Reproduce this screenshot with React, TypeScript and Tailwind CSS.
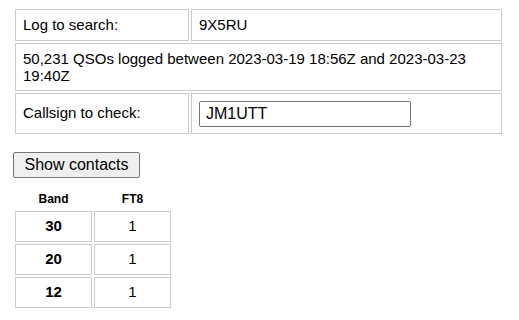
export default function App() {
  const rows = [
    { band: "30", ft8: "1" },
    { band: "20", ft8: "1" },
    { band: "12", ft8: "1" },
  ];
  const cell = "border border-[#cccccc] px-[7px] align-middle";
  return (
    <div className="min-h-screen bg-white text-black font-['Liberation_Sans',Arial,sans-serif] text-[15px] pl-[13px] pt-[7px]">
      <table className="border-separate border-spacing-[2px] w-[491px]">
        <tbody>
          <tr className="h-[32px]">
            <td className={`${cell} w-[174px]`}>Log to search:</td>
            <td className={cell}>9X5RU</td>
          </tr>
          <tr className="h-[48px]">
            <td colSpan={2} className={`${cell} leading-[17px]`}>
              50,231 QSOs logged between 2023-03-19 18:56Z and 2023-03-23 19:40Z
            </td>
          </tr>
          <tr className="h-[41px]">
            <td className={cell}>Callsign to check:</td>
            <td className={cell}>
              <input
                type="text"
                defaultValue="JM1UTT"
                className="w-[212px] h-[26px] border border-[#767676] rounded-[2px] px-[6px] text-[16px] outline-none"
              />
            </td>
          </tr>
        </tbody>
      </table>

      {/* Submit */}
      <button
        type="button"
        className="mt-[16px] h-[26px] w-[127px] border border-[#767676] bg-[#efefef] rounded-[2px] text-[16px] leading-none"
      >
        Show contacts
      </button>

      {/* Results */}
      <table className="border-separate border-spacing-[2px] mt-[9px]">
        <thead>
          <tr className="h-[20px]">
            <th className="w-[77px] text-[12px] font-bold">Band</th>
            <th className="w-[77px] text-[12px] font-bold">FT8</th>
          </tr>
        </thead>
        <tbody>
          {rows.map((r) => (
            <tr key={r.band} className="h-[31px]">
              <td className="border border-[#cccccc] text-center font-bold">{r.band}</td>
              <td className="border border-[#cccccc] text-center">{r.ft8}</td>
            </tr>
          ))}
        </tbody>
      </table>
    </div>
  );
}
